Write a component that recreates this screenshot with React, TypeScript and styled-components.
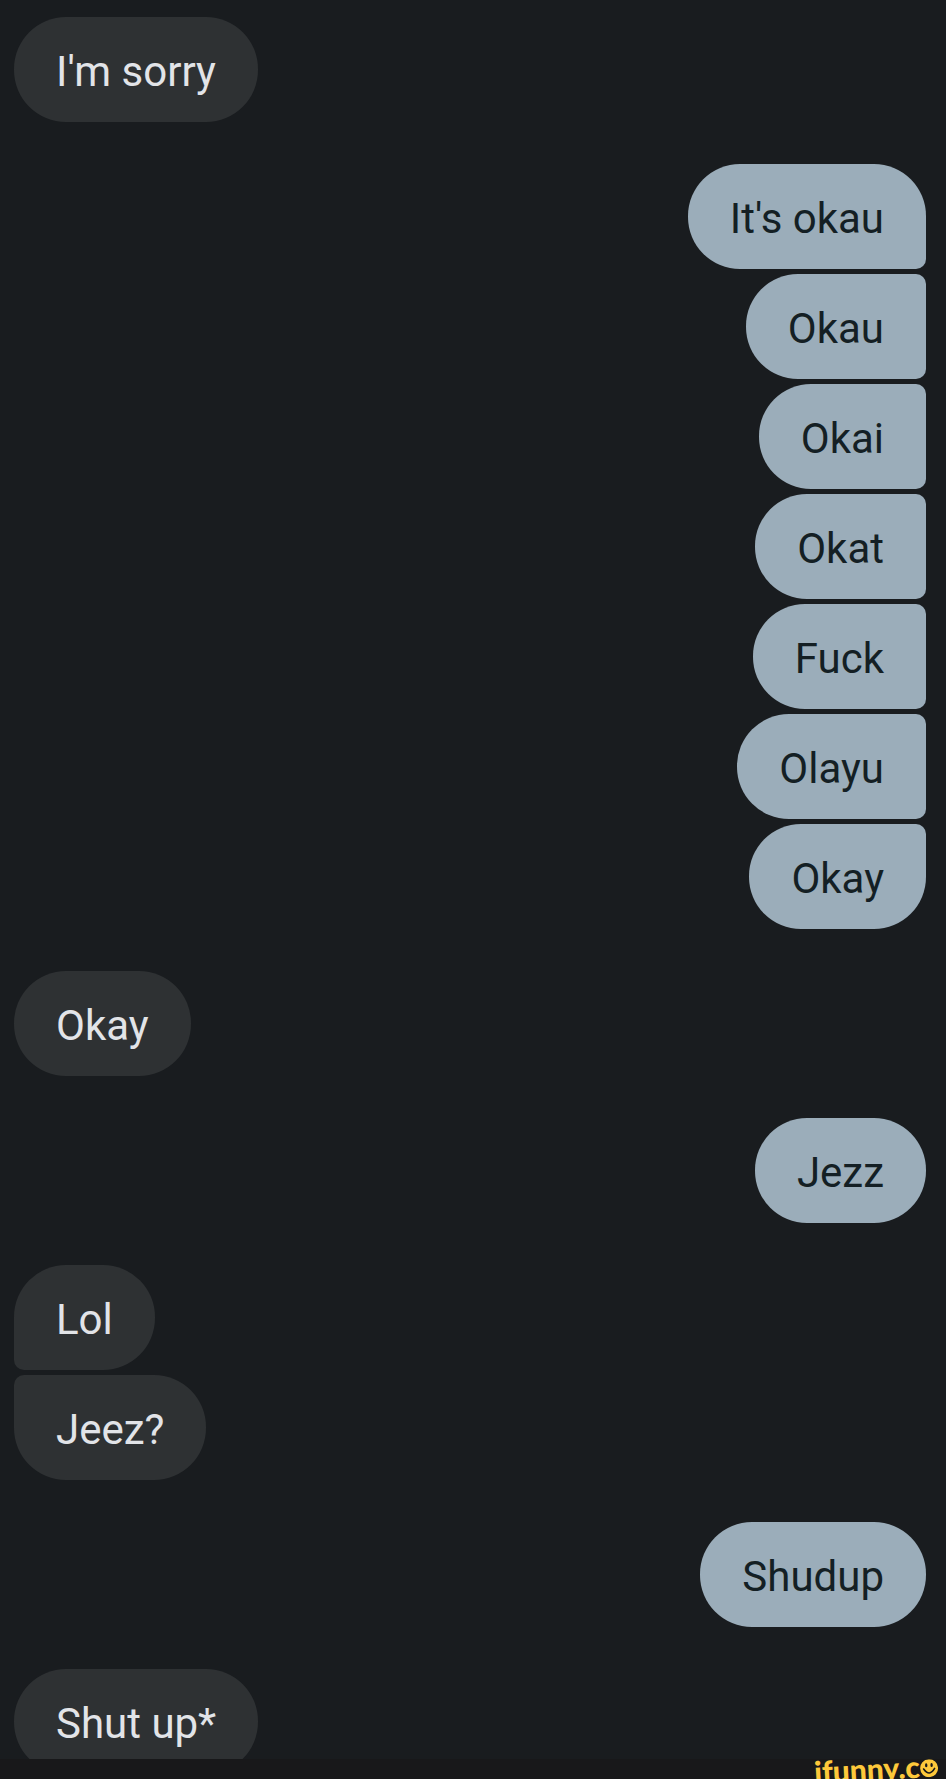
import React from "react";
import styled, { createGlobalStyle } from "styled-components";

type Side = "in" | "out";

const GlobalStyle = createGlobalStyle`
  *, *::before, *::after { box-sizing: border-box; }
  body { margin: 0; background: #191c1f; }
`;

const Page = styled.main`
  display: flex;
  flex-direction: column;
  height: 100vh;
  overflow: hidden;
  background: #191c1f;
  font-family: Roboto, "Liberation Sans", sans-serif;
`;

const Thread = styled.section`
  flex: 1;
  min-height: 0;
  overflow: hidden;
  display: flex;
  flex-direction: column;
  gap: 42px;
  padding: 17px 20px 0 14px;
`;

const Group = styled.div<{ $side: Side }>`
  flex: none;
  display: flex;
  flex-direction: column;
  align-items: ${(p) => (p.$side === "out" ? "flex-end" : "flex-start")};
  gap: 5px;
`;

const Bubble = styled.p<{ $side: Side }>`
  margin: 0;
  padding: 30px 42px 26px;
  font-size: 42px;
  line-height: 49px;
  color: ${(p) => (p.$side === "out" ? "#141f24" : "#e2e4e8")};
  background: ${(p) => (p.$side === "out" ? "#9badba" : "#2e3133")};
  border-radius: 52px;

  &:not(:last-child) {
    ${(p) => (p.$side === "out" ? "border-bottom-right-radius" : "border-bottom-left-radius")}: 10px;
  }
  &:not(:first-child) {
    ${(p) => (p.$side === "out" ? "border-top-right-radius" : "border-top-left-radius")}: 10px;
  }
`;

const Footer = styled.footer`
  flex: none;
  display: flex;
  align-items: center;
  justify-content: flex-end;
  height: 20px;
  padding: 0 8px 2px 0;
  overflow: hidden;
  background: #18181a;
`;

const Brand = styled.span`
  display: flex;
  align-items: baseline;
  font-family: Lato, sans-serif;
  font-size: 30px;
  font-weight: 900;
  line-height: 30px;
  color: #fdc83b;
  transform: rotate(-3deg);
`;

const Smiley = styled.svg`
  width: 18px;
  height: 18px;
`;

const groups: { side: Side; messages: string[] }[] = [
  { side: "in", messages: ["I'm sorry"] },
  { side: "out", messages: ["It's okau", "Okau", "Okai", "Okat", "Fuck", "Olayu", "Okay"] },
  { side: "in", messages: ["Okay"] },
  { side: "out", messages: ["Jezz"] },
  { side: "in", messages: ["Lol", "Jeez?"] },
  { side: "out", messages: ["Shudup"] },
  { side: "in", messages: ["Shut up*"] },
];

export default function App() {
  return (
    <>
      <GlobalStyle />
      <Page>
        <Thread>
          {groups.map((group, i) => (
            <Group key={i} $side={group.side}>
              {group.messages.map((text) => (
                <Bubble key={text} $side={group.side}>
                  {text}
                </Bubble>
              ))}
            </Group>
          ))}
        </Thread>
        <Footer>
          <Brand>
            ifunny.c
            <Smiley viewBox="0 0 18 18" aria-hidden="true">
              <circle cx="9" cy="9" r="9" fill="#fdc83b" />
              <ellipse cx="6.3" cy="6" rx="1.2" ry="2" fill="#18181a" />
              <ellipse cx="11.7" cy="6" rx="1.2" ry="2" fill="#18181a" />
              <path d="M3.5 9.5 Q9 18 14.5 9.5" fill="none" stroke="#18181a" strokeWidth="1.6" strokeLinecap="round" />
            </Smiley>
          </Brand>
        </Footer>
      </Page>
    </>
  );
}
